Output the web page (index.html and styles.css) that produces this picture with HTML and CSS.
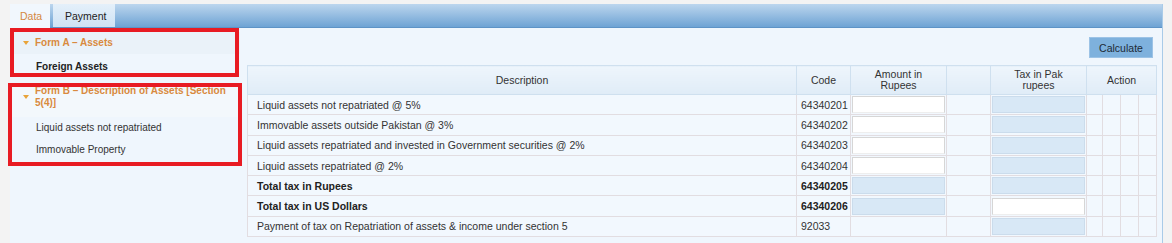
FILE: index.html
```html
<!DOCTYPE html>
<html>
<head>
<meta charset="utf-8">
<link rel="stylesheet" href="styles.css">
</head>
<body>
<div class="app">
  <div class="tabbar">
    <div class="tab active">Data</div>
    <div class="tab">Payment</div>
  </div>
  <div class="content">
    <div class="sidebar">
      <div class="group-head"><span class="caret"></span><span>Form A – Assets</span></div>
      <div class="item bold">Foreign Assets</div>
      <div class="group-head two"><span class="caret"></span><span>Form B – Description of Assets [Section 5(4)]</span></div>
      <div class="item">Liquid assets not repatriated</div>
      <div class="item">Immovable Property</div>
    </div>
    <div class="main">
      <div class="toolbar"><button class="btn">Calculate</button></div>
      <table class="grid">
        <colgroup>
          <col class="c-desc"><col class="c-code"><col class="c-amt"><col class="c-blank"><col class="c-tax">
          <col class="c-a1"><col class="c-a2"><col class="c-a3"><col class="c-a4">
        </colgroup>
        <thead>
          <tr><th>Description</th><th>Code</th><th>Amount in<br>Rupees</th><th></th><th>Tax in Pak<br>rupees</th><th colspan="4">Action</th></tr>
        </thead>
        <tbody>
          <tr><td class="desc">Liquid assets not repatriated @ 5%</td><td>64340201</td><td class="in"><div class="box w"></div></td><td></td><td class="in"><div class="box b"></div></td><td></td><td></td><td></td><td></td></tr>
          <tr><td class="desc">Immovable assets outside Pakistan @ 3%</td><td>64340202</td><td class="in"><div class="box w"></div></td><td></td><td class="in"><div class="box b"></div></td><td></td><td></td><td></td><td></td></tr>
          <tr><td class="desc">Liquid assets repatriated and invested in Government securities @ 2%</td><td>64340203</td><td class="in"><div class="box w"></div></td><td></td><td class="in"><div class="box b"></div></td><td></td><td></td><td></td><td></td></tr>
          <tr><td class="desc">Liquid assets repatriated @ 2%</td><td>64340204</td><td class="in"><div class="box w"></div></td><td></td><td class="in"><div class="box b"></div></td><td></td><td></td><td></td><td></td></tr>
          <tr class="strong"><td class="desc">Total tax in Rupees</td><td>64340205</td><td class="in"><div class="box b"></div></td><td></td><td class="in"><div class="box b"></div></td><td></td><td></td><td></td><td></td></tr>
          <tr class="strong"><td class="desc">Total tax in US Dollars</td><td>64340206</td><td class="in"><div class="box b"></div></td><td></td><td class="in"><div class="box w"></div></td><td></td><td></td><td></td><td></td></tr>
          <tr><td class="desc">Payment of tax on Repatriation of assets &amp; income under section 5</td><td>92033</td><td></td><td></td><td class="in"><div class="box b"></div></td><td></td><td></td><td></td><td></td></tr>
        </tbody>
      </table>
    </div>
  </div>
</div>
<div class="mark mark-a"></div>
<div class="mark mark-b"></div>
</body>
</html>
```
FILE: styles.css
```css
html, body {
  margin: 0;
  padding: 0;
  background: #f3f3f3;
  font-family: "Liberation Sans", Arial, sans-serif;
  color: #333;
}
.app {
  margin: 4px 0 0 10px;
  width: 1153px;
  height: 239px;
  display: flex;
  flex-direction: column;
  border-right: 1px solid #a9cbe8;
  box-sizing: border-box;
}
.tabbar {
  height: 23px;
  flex: none;
  display: flex;
  gap: 3px;
  background: linear-gradient(#bcd6ee, #6ea3d4);
  border-bottom: 1px solid #5d93c6;
}
.tab {
  height: 23px;
  box-sizing: border-box;
  padding: 6px 12px 0 12px;
  font-size: 10.5px;
  color: #222;
  background: linear-gradient(#e4f0fa, #cfe2f4);
  width: 62px;
}
.tab.active {
  width: 40px;
  padding-left: 10px;
  color: #d4873f;
  background: #f1f7fd;
  height: 24px;
}
.content {
  flex: 1;
  display: flex;
  background: #eff6fd;
}
.sidebar {
  width: 230px;
  flex: none;
  padding-top: 4px;
  box-sizing: border-box;
  font-size: 10px;
}
.group-head {
  display: flex;
  align-items: center;
  gap: 6px;
  padding: 5px 6px 5px 13px;
  line-height: 12px;
  font-weight: bold;
  color: #d98a3e;
  background: #eaf2f9;
}
.group-head.two {
  margin-top: 5px;
  padding-top: 2px;
  padding-bottom: 8px;
  background: #f3f8fc;
}
.caret {
  width: 0;
  height: 0;
  flex: none;
  border-left: 3.5px solid transparent;
  border-right: 3.5px solid transparent;
  border-top: 4px solid #e9a43a;
}
.item {
  height: 22px;
  line-height: 22px;
  padding-left: 26px;
  color: #333;
}
.item.bold {
  font-weight: bold;
  color: #222;
  margin-top: 2px;
  margin-bottom: 0;
}
.main {
  flex: 1;
  padding: 9px 7px 0 7px;
}
.toolbar {
  display: flex;
  justify-content: flex-end;
  padding-right: 4px;
  margin-bottom: 7px;
}
.btn {
  width: 64px;
  height: 21px;
  padding: 0;
  font-family: inherit;
  font-size: 10.5px;
  color: #1d2a36;
  background: #7eb1dd;
  border: 1px solid #9cc3e6;
}
.grid {
  width: 909px;
  border-collapse: collapse;
  table-layout: fixed;
  font-size: 10.5px;
}
.c-desc { width: 549px; }
.c-code { width: 54px; }
.c-amt { width: 96px; }
.c-blank { width: 44px; }
.c-tax { width: 96px; }
.c-a1 { width: 16px; }
.c-a2 { width: 18px; }
.c-a3 { width: 18px; }
.c-a4 { width: 18px; }
.grid th {
  height: 28px;
  padding: 0;
  font-weight: normal;
  line-height: 11px;
  color: #333;
  background: linear-gradient(#eef5fc, #e0ecf7);
  border: 1px solid #cfe0ef;
}
.grid td {
  height: 19.3px;
  padding: 0 4px;
  background: #f2f8fe;
  border: 1px solid #e2dde1;
  white-space: nowrap;
}
.grid td.desc { padding-left: 9px; }
.grid td.in { padding: 0; }
.strong td { font-weight: bold; color: #222; }
.box {
  height: 17px;
  margin: 0 1px;
  box-sizing: border-box;
}
.box.w {
  background: #fff;
  border: 1px solid #d6d6d6;
  border-bottom-color: #eee;
}
.box.b {
  background: #d8e8f6;
  border: 1px solid #cbdcec;
}
.mark {
  position: absolute;
  border: 4px solid #e81b23;
  box-sizing: border-box;
}
.mark-a { left: 10px; top: 28px; width: 229px; height: 49px; }
.mark-b { left: 8px; top: 83px; width: 234px; height: 83px; }
```
